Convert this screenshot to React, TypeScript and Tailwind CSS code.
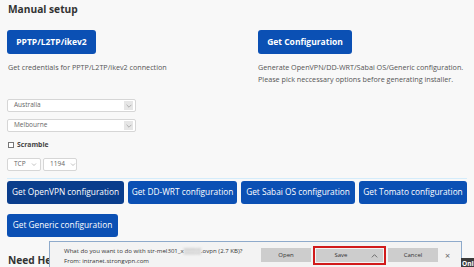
import React from "react";

const font = { fontFamily: '"Open Sans", "Noto Sans", Arial, sans-serif' };

function Chevron({ className = "" }: { className?: string }) {
  return (
    <svg viewBox="0 0 10 6" className={className} fill="none" stroke="currentColor" strokeWidth="1.2">
      <path d="M1 1 L5 5 L9 1" />
    </svg>
  );
}

function Select({ label }: { label: string }) {
  return (
    <div className="flex h-[13px] w-[129px] items-center justify-between rounded-[2px] border border-[#d6d6d6] bg-white pl-[6px] pr-[2px]">
      <span className="text-[6.5px] leading-none text-[#666]">{label}</span>
      <span className="flex h-[9px] w-[9px] items-center justify-center bg-[#e6e6e6] text-[#999]">
        <Chevron className="h-[4px] w-[6px]" />
      </span>
    </div>
  );
}

function Small({ label, w }: { label: string; w: string }) {
  return (
    <div className={`flex h-[13px] ${w} items-center gap-[5px] rounded-[2px] border border-[#d6d6d6] bg-white pl-[6px]`}>
      <span className="text-[6.5px] leading-none text-[#666]">{label}</span>
      <Chevron className="h-[3px] w-[6px] text-[#999]" />
    </div>
  );
}

function Btn({ label, w, dark }: { label: string; w: string; dark?: boolean }) {
  return (
    <div
      className={`flex h-[23px] ${w} items-center justify-center rounded-[3px] text-[8.3px] text-white ${
        dark ? "bg-[#0a3d8c]" : "bg-[#0b50b4]"
      }`}
    >
      {label}
    </div>
  );
}

export default function App() {
  return (
    <div style={font} className="relative h-[267px] w-[474px] overflow-hidden bg-[#f8f8f8]">
      <div className="flex flex-col pl-[7px] pt-[2px]">
        <div className="pl-[1px] text-[10.2px] font-bold leading-[14px] text-[#333]">Manual setup</div>

        <div className="mt-[14px] flex">
          <div className="flex w-[251px] flex-col">
            <div className="flex h-[24px] w-[89px] items-center justify-center rounded-[3px] bg-[#0b50b4] text-[8.5px] font-bold text-white">
              PPTP/L2TP/ikev2
            </div>
            <div className="mt-[7px] pl-[1px] text-[7.2px] leading-[12px] text-[#555]">
              Get credentials for PPTP/L2TP/ikev2 connection
            </div>
          </div>
          <div className="flex flex-col">
            <div className="flex h-[24px] w-[94px] items-center justify-center rounded-[3px] bg-[#0b50b4] text-[8.5px] font-bold text-white">
              Get Configuration
            </div>
            <div className="mt-[7px] text-[7.2px] leading-[12px] text-[#555]">
              Generate OpenVPN/DD-WRT/Sabai OS/Generic configuration.
              <br />
              Please pick neccessary options before generating installer.
            </div>
          </div>
        </div>

        <div className="mt-[14px] flex flex-col gap-[7px]">
          <Select label="Australia" />
          <Select label="Melbourne" />
        </div>

        <div className="mt-[8px] flex h-[10px] items-center gap-[3px] pl-[1px]">
          <span className="h-[6px] w-[6px] border border-[#777] bg-white" />
          <span className="text-[6.8px] font-bold leading-none text-[#444]">Scramble</span>
        </div>

        <div className="mt-[8px] flex gap-[2px]">
          <Small label="TCP" w="w-[34px]" />
          <Small label="1194" w="w-[34px]" />
        </div>

        <div className="mt-[7px] h-[1px] w-[460px] bg-[#d4ecfb]" />

        <div className="mt-[2px] flex w-[462px] flex-wrap gap-x-[4px] gap-y-[10px]">
          <Btn label="Get OpenVPN configuration" w="w-[117px]" dark />
          <Btn label="Get DD-WRT configuration" w="w-[109px]" />
          <Btn label="Get Sabai OS configuration" w="w-[114px]" />
          <Btn label="Get Tomato configuration" w="w-[108px]" />
          <Btn label="Get Generic configuration" w="w-[111px]" />
        </div>

        <div className="mt-[16px] pl-[1px] text-[10.2px] font-bold leading-[14px] text-[#333]">Need Help?</div>
      </div>

      {/* download bar */}
      <div className="absolute left-[49px] top-[241px] flex h-[30px] w-[413px] items-start border border-[#8eaacb] bg-[#f3f3f3] pl-[14px] pt-[4px]">
        <div className="flex w-[197px] flex-col text-[6.1px] leading-[10px] text-[#333]">
          <span className="whitespace-nowrap">
            What do you want to do with str-mel301_x
            <span className="blur-[0.8px] text-[#999]">▒▒▒▒</span>
            .ovpn (2.7 KB)?
          </span>
          <span>From: intranet.strongvpn.com</span>
        </div>
        <div className="mt-[2px] flex h-[14px] w-[50px] items-center justify-center bg-[#cdcdcd] text-[6px] text-[#333]">
          Open
        </div>
        <div className="ml-[2px] flex h-[19px] w-[73px] items-center border-2 border-[#d11a1a] p-[1px]">
          <div className="flex h-full w-full items-center bg-[#cdcdcd] text-[6px] text-[#333]">
            <span className="flex flex-1 justify-center">Save</span>
            <span className="flex w-[17px] items-center justify-center">
              <svg viewBox="0 0 10 6" className="h-[4px] w-[7px]" fill="none" stroke="#555" strokeWidth="1.2">
                <path d="M1 5 L5 1 L9 5" />
              </svg>
            </span>
          </div>
        </div>
        <div className="ml-[2px] mt-[2px] flex h-[14px] w-[50px] items-center justify-center bg-[#cdcdcd] text-[6px] text-[#333]">
          Cancel
        </div>
        <div className="ml-[7px] mt-[3px] flex h-[12px] items-center text-[9px] leading-none text-[#666]">×</div>
      </div>

      <div className="absolute left-[461px] top-[258px] flex h-[12px] w-[20px] items-start bg-[#3b3b3b] pl-[1px] pt-[1px] text-[6.5px] font-bold leading-[9px] text-white">
        Onli
      </div>
    </div>
  );
}
